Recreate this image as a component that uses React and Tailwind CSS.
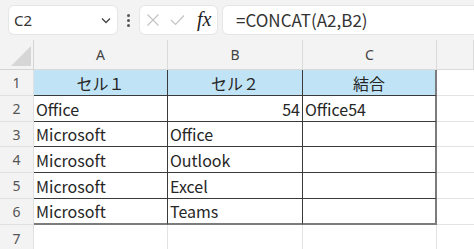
import React from "react";

const jp = { fontFamily: '"Noto Sans CJK JP", "Noto Sans", sans-serif' };
const ui = { fontFamily: '"Noto Sans", "Liberation Sans", sans-serif' };

const rows = [
  { h: "h-[26px]", cells: ["セル１", "セル２", "結合"], header: true },
  { h: "h-[26px]", cells: ["Office", "54", "Office54"] },
  { h: "h-[25px]", cells: ["Microsoft", "Office", ""] },
  { h: "h-[26px]", cells: ["Microsoft", "Outlook", ""] },
  { h: "h-[26px]", cells: ["Microsoft", "Excel", ""] },
  { h: "h-[26px]", cells: ["Microsoft", "Teams", ""] },
];

function Corner() {
  return (
    <div className="w-[34px] h-full relative border-r border-b border-[#d4d4d4] bg-[#f3f3f3]">
      <svg className="absolute right-[2px] bottom-[3px]" width="20" height="20" viewBox="0 0 20 20">
        <polygon points="20,0 20,20 0,20" fill="#d6d6d6" />
      </svg>
    </div>
  );
}

export default function App() {
  return (
    <div className="w-[474px] h-[249px] overflow-hidden bg-[#f3f3f3] text-[#262626]">
      {/* toolbar */}
      <div className="h-[40px] flex items-center pl-[9px]">
        <div className="w-[108px] h-[28px] bg-white rounded-[5px] shadow-[0_0_0_1px_#e6e6e6] flex items-center justify-between pl-[5px] pr-[6px]" style={ui}>
          <span className="text-[15px] text-[#333]">C2</span>
          <svg width="10" height="7" viewBox="0 0 10 7">
            <path d="M1 1.5 L5 5.5 L9 1.5" fill="none" stroke="#444" strokeWidth="1.3" />
          </svg>
        </div>
        <div className="w-[23px] flex flex-col items-center gap-[2px]">
          <span className="w-[3px] h-[3px] rounded-full bg-[#555]" />
          <span className="w-[3px] h-[3px] rounded-full bg-[#555]" />
          <span className="w-[3px] h-[3px] rounded-full bg-[#555]" />
        </div>
        <div className="w-[77px] h-[28px] bg-white rounded-[5px] shadow-[0_0_0_1px_#e6e6e6] flex items-center pl-[6px]">
          <svg width="14" height="14" viewBox="0 0 14 14">
            <path d="M1.5 1.5 L12.5 12.5 M12.5 1.5 L1.5 12.5" stroke="#c4c4c4" strokeWidth="1.2" />
          </svg>
          <svg className="ml-[10px]" width="15" height="12" viewBox="0 0 15 12">
            <path d="M1 6 L5.5 10.5 L14 1.5" fill="none" stroke="#c4c4c4" strokeWidth="1.2" />
          </svg>
          <span className="ml-[12px] text-[20px] italic text-[#222] leading-none pb-[2px]" style={{ fontFamily: '"Liberation Serif", serif' }}>fx</span>
        </div>
        <div className="ml-[6px] flex-1 h-[28px] bg-white rounded-l-[5px] shadow-[0_0_0_1px_#e6e6e6] flex items-center pl-[13px]" style={jp}>
          <span className="text-[17px] text-[#333]">=CONCAT(A2,B2)</span>
        </div>
      </div>

      {/* grid */}
      <div className="grid grid-cols-[34px_134px_135px_134px_1fr] bg-white">
        {/* column header row */}
        <div className="h-[30px] bg-[#f3f3f3]"><Corner /></div>
        {["A", "B", "C", "D"].map((c) => (
          <div key={c} className="h-[30px] bg-[#f3f3f3] border-r border-b border-[#dadada] flex items-center justify-center text-[14px] text-[#444]" style={ui}>
            {c === "D" ? "" : c}
          </div>
        ))}

        {rows.map((r, i) => {
          const last = i === rows.length - 1;
          return (
            <React.Fragment key={i}>
              <div className={`${r.h} bg-[#f3f3f3] border-r border-b border-[#e0e0e0] flex items-center justify-center text-[14px] text-[#555]`} style={ui}>
                {i + 1}
              </div>
              {r.cells.map((c, j) => {
                const lastCol = j === 2;
                const borderR = lastCol ? "border-r-2 border-r-[#7c7c7c]" : "border-r border-r-[#3a3a3a]";
                const borderB = last ? "border-b-2 border-b-[#7c7c7c]" : "border-b border-b-[#3a3a3a]";
                const align = r.header ? "justify-center" : c === "54" ? "justify-end pr-[2px]" : "justify-start pl-[2px]";
                return (
                  <div
                    key={j}
                    className={`${r.h} ${borderR} ${borderB} ${r.header ? "bg-[#c0e4f5]" : "bg-white"} flex items-center ${align} text-[16px] text-[#262626] overflow-hidden whitespace-nowrap`}
                    style={jp}
                  >
                    {c}
                  </div>
                );
              })}
              <div className={`${r.h} border-b border-[#e3e3e3]`} />
            </React.Fragment>
          );
        })}

        {/* row 7 */}
        <div className="h-[26px] bg-[#f3f3f3] border-r border-[#e0e0e0] flex items-center justify-center text-[14px] text-[#555]" style={ui}>7</div>
        <div className="h-[26px] border-r border-[#e3e3e3]" />
        <div className="h-[26px] border-r border-[#e3e3e3]" />
        <div className="h-[26px] border-r border-[#e3e3e3]" />
        <div className="h-[26px]" />
      </div>
    </div>
  );
}
